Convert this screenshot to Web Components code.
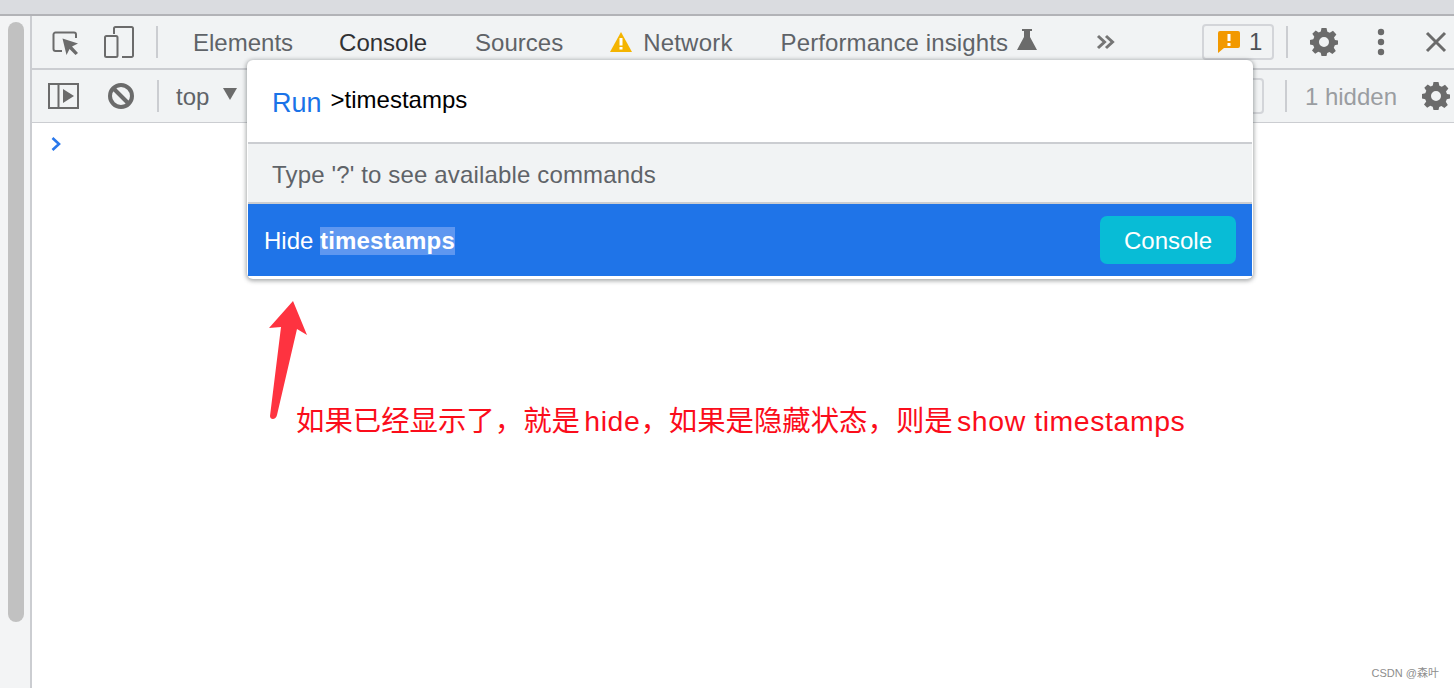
<!DOCTYPE html>
<html lang="en">
<head>
<meta charset="utf-8">
<title>DevTools command menu</title>
<style>
  html, body { margin: 0; height: 100%; overflow: hidden; background: #fff; }
  body { font-family: "Liberation Sans", Arimo, Arial, sans-serif; }
</style>
</head>
<body>
<dev-tools>
  <tool-bar slot="main" class="tabs">
    <tool-icon name="inspect"></tool-icon>
    <tool-icon name="device"></tool-icon>
    <tool-sep></tool-sep>
    <tab-strip>
      <tab-item style="margin-right:-1px">Elements</tab-item>
      <tab-item active style="margin-right:1px">Console</tab-item>
      <tab-item>Sources</tab-item>
      <tab-item style="letter-spacing:.2px;margin-right:1px"><tool-icon slot="before" name="warning"></tool-icon>Network</tab-item>
      <tab-item style="letter-spacing:.1px"><span>Performance insights</span><tool-icon slot="after" name="flask"></tool-icon></tab-item>
    </tab-strip>
  </tool-bar>
  <command-menu slot="over"></command-menu>
  <note-arrow slot="over"></note-arrow>
</dev-tools>

<script>
const ICONS = {
  inspect: [28, 28, '<path d="M11 23H4.500A2 2 0 0 1 2.500 21V6.500A2 2 0 0 1 4.500 4.500H23A2 2 0 0 1 25 6.500V10" fill="none" stroke="#6b6b6b" stroke-width="2"/><path d="M11.500 10.500 27 15.500 21 18.500 27 25 24.500 27 18.500 21 15.500 27Z" fill="#6b6b6b"/>'],
  device: [30, 32, '<path d="M10 8V2.500A1.500 1.500 0 0 1 11.500 1H27.500A1.500 1.500 0 0 1 29 2.500V29.500A1.500 1.500 0 0 1 27.500 31H18" fill="none" stroke="#6b6b6b" stroke-width="2"/><rect x="1" y="10" width="12.500" height="21" rx="1.500" fill="none" stroke="#6b6b6b" stroke-width="2"/>'],
  warning: [22, 20, '<path d="M11 0 22 20H0Z" fill="#f4b400"/><rect x="9.500" y="6" width="3" height="7.500" fill="#fff"/><rect x="9.500" y="15" width="3" height="2.500" fill="#fff"/>'],
  flask: [20, 21, '<path d="M5 0H15V2H13V8L20 21H0L7 8V2H5Z" fill="#6b6b6b"/>'],
  more: [19, 16, '<path d="M2 2 8.500 8 2 14M10 2 16.500 8 10 14" fill="none" stroke="#757575" stroke-width="3"/>'],
  issue: [22, 22, '<path d="M2 0H20A2 2 0 0 1 22 2V15A2 2 0 0 1 20 17H6L0 22V2A2 2 0 0 1 2 0Z" fill="#f29900"/><rect x="9.500" y="3" width="3" height="7" fill="#fff"/><rect x="9.500" y="12" width="3" height="3" fill="#fff"/>'],
  gear: [28, 28, '<path fill-rule="evenodd" d="M11.500 0H16.500L17.400 3.700 19.800 4.700 23 2.700 26.400 6.500 24 9.400 25 12 28 12.500V16.500L24.800 17.300 23.800 19.700 25.800 23 22.400 26 19.400 24 17.200 25 16.500 28H11.500L10.700 24.800 8.300 23.800 5.200 25.800 2 22.500 4.200 19.500 3.200 17.200 0 16.500V12L3.300 11.200 4.300 8.800 2.300 5.700 5.700 2.500 8.700 4.500 10.800 3.500ZM14 9A5 5 0 1 0 14 19 5 5 0 0 0 14 9Z" fill="#6b6b6b"/>'],
  dots: [8, 28, '<circle cx="4" cy="4" r="3.200" fill="#6b6b6b"/><circle cx="4" cy="14" r="3.200" fill="#6b6b6b"/><circle cx="4" cy="24" r="3.200" fill="#6b6b6b"/>'],
  close: [22, 22, '<path d="M2 2 20 20M20 2 2 20" stroke="#6b6b6b" stroke-width="3"/>'],
  sidebar: [31, 26, '<rect x="1" y="1" width="29" height="24" fill="none" stroke="#6b6b6b" stroke-width="2"/><path d="M10.500 1V25" stroke="#6b6b6b" stroke-width="2"/><path d="M15 6 26 13 15 20Z" fill="#6b6b6b"/>'],
  block: [28, 28, '<circle cx="14" cy="14" r="11" fill="none" stroke="#6b6b6b" stroke-width="4"/><path d="M6.500 6.500 21.500 21.500" stroke="#6b6b6b" stroke-width="4"/>'],
  caret: [16, 12, '<path d="M1 0H15L8 12Z" fill="#6b6b6b"/>'],
  prompt: [12, 16, '<path d="M2.500 2 9 8 2.500 14" fill="none" stroke="#2a78eb" stroke-width="2.600"/>']
};

class ToolIcon extends HTMLElement {
  constructor() {
    super();
    const [w, h, body] = ICONS[this.getAttribute('name')];
    this.attachShadow({ mode: 'open' });
    this.shadowRoot.innerHTML = `
      <style>
        :host { display: inline-flex; flex: none; }
        svg { display: block; }
      </style>
      <svg width="${w}" height="${h}" viewBox="0 0 ${w} ${h}">${body}</svg>
    `;
  }
}

class ToolSep extends HTMLElement {
  constructor() {
    super();
    this.attachShadow({ mode: 'open' });
    this.shadowRoot.innerHTML = `
      <style>
        :host { display: block; flex: none; width: 2px; height: 32px; background: #cbcdd1; }
      </style>
    `;
  }
}

class TabItem extends HTMLElement {
  constructor() {
    super();
    this.attachShadow({ mode: 'open' });
    this.shadowRoot.innerHTML = `
      <style>
        :host {
          display: flex; align-items: center; flex: none; padding-top: 2px;
          font-size: 24px; color: #5f6368; white-space: nowrap;
        }
        :host([active]) { color: #303134; }
        ::slotted([slot=before]) { margin-right: 11px; margin-top: -2px; }
        ::slotted([slot=after]) { margin-left: 9px; margin-top: -7px; }
      </style>
      <slot name="before"></slot><slot></slot><slot name="after"></slot>
    `;
  }
}

class TabStrip extends HTMLElement {
  constructor() {
    super();
    this.attachShadow({ mode: 'open' });
    this.shadowRoot.innerHTML = `
      <style>
        :host { display: flex; align-items: center; flex: none; gap: 47px; margin-left: 35px; height: 100%; }
      </style>
      <slot></slot>
    `;
  }
}

class ToolBar extends HTMLElement {
  constructor() {
    super();
    this.attachShadow({ mode: 'open' });
    this.shadowRoot.innerHTML = `
      <style>
        :host {
          display: flex; align-items: center; box-sizing: border-box;
          height: 54px; background: #f1f3f4; border-bottom: 2px solid #cbcdd1;
        }
        .tail { display: flex; align-items: center; height: 100%; margin-left: auto; }
        .gap-a { margin-left: 59px; }
        .issues {
          display: flex; align-items: center; gap: 9px; box-sizing: border-box;
          width: 72px; height: 36px; padding-left: 14px; margin-right: 12px;
          border: 2px solid #d3d5d9; border-radius: 4px;
          font-size: 24px; color: #4d5156;
        }
        .first { display: flex; align-items: center; height: 100%; }
      </style>
      <div class="first">
        <slot></slot>
        <tool-icon class="gap-a" name="more"></tool-icon>
      </div>
      <div class="tail">
        <div class="issues"><tool-icon name="issue"></tool-icon>1</div>
        <tool-sep></tool-sep>
        <tool-icon name="gear" style="margin-left:22px"></tool-icon>
        <tool-icon name="dots" style="margin-left:39px"></tool-icon>
        <tool-icon name="close" style="margin:0 7px 0 40px"></tool-icon>
      </div>
    `;
  }
  connectedCallback() {
    const kids = this.children;
    kids[0].style.marginLeft = '19px';
    kids[1].style.marginLeft = '25px';
    kids[2].style.marginLeft = '22px';
  }
}

class FilterBar extends HTMLElement {
  constructor() {
    super();
    this.attachShadow({ mode: 'open' });
    this.shadowRoot.innerHTML = `
      <style>
        :host {
          display: flex; align-items: center; box-sizing: border-box;
          height: 53px; padding-bottom: 1px; background: #f1f3f4; border-bottom: 1px solid #cbcdd1;
        }
        .ctx { font-size: 24px; color: #5f6368; margin-left: 17px; padding-top: 2px; }
        .stale {
          box-sizing: border-box; width: 13px; height: 36px; margin-left: auto;
          border: 2px solid #d3d5d9; border-left: 0; border-radius: 0 4px 4px 0;
        }
        .hidden { font-size: 24px; color: #9a9da1; margin-left: 18px; padding-top: 2px; }
        tool-sep { flex: none; }
      </style>
      <tool-icon name="sidebar" style="margin-left:16px"></tool-icon>
      <tool-icon name="block" style="margin-left:28px"></tool-icon>
      <tool-sep style="margin-left:22px"></tool-sep>
      <span class="ctx">top</span>
      <tool-icon name="caret" style="margin-left:13px;margin-top:-3px"></tool-icon>
      <div class="stale"></div>
      <tool-sep style="margin-left:21px"></tool-sep>
      <span class="hidden">1 hidden</span>
      <tool-icon name="gear" style="margin:0 4px 0 25px"></tool-icon>
    `;
  }
}

class CommandMenu extends HTMLElement {
  constructor() {
    super();
    this.attachShadow({ mode: 'open' });
    this.shadowRoot.innerHTML = `
      <style>
        :host {
          position: absolute; left: 247px; top: 60px; width: 1006px;
          display: flex; flex-direction: column; box-sizing: border-box;
          background: #fff; border-radius: 6px; padding: 0 1px 3px;
          box-shadow: 0 1px 4px 1px rgba(60,64,67,.45);
        }
        .prompt { display: flex; height: 82px; box-sizing: border-box; padding-left: 24px; }
        .run { font-size: 27px; color: #1a73e8; margin-top: 27px; line-height: 32px; }
        .query { font-size: 24px; color: #000; margin: 26px 0 0 9px; line-height: 28px; }
        .hint {
          height: 60px; box-sizing: border-box; padding: 3px 0 0 24px;
          display: flex; align-items: center; letter-spacing: .15px;
          background: #f1f3f4; font-size: 24px; color: #5f6368;
          border-top: 2px solid #cbcdd1;
        }
        .row {
          height: 74px; box-sizing: border-box; padding: 0 16px;
          display: flex; align-items: center; justify-content: space-between;
          background: #1f74e8; color: #fff; font-size: 24px;
          border-top: 2px solid #cbcdd1;
        }
        .what { padding-top: 1px; }
        mark {
          display: inline-block; background: #5e97f0; color: #fff; letter-spacing: .15px;
          font-weight: 700; line-height: 28px;
        }
        .tag {
          width: 136px; height: 48px; border-radius: 7px; background: #08bcd6;
          display: flex; align-items: center; justify-content: center;
          font-size: 24px; padding-top: 2px; box-sizing: border-box;
        }
      </style>
      <div class="prompt"><span class="run">Run</span><span class="query">&gt;timestamps</span></div>
      <div class="hint">Type '?' to see available commands</div>
      <div class="row"><span class="what">Hide <mark>timestamps</mark></span><span class="tag">Console</span></div>
    `;
  }
}

class NoteArrow extends HTMLElement {
  constructor() {
    super();
    this.attachShadow({ mode: 'open' });
    this.shadowRoot.innerHTML = `
      <style>
        :host { display: contents; }
        svg { position: absolute; left: 265px; top: 298px; }
        .note {
          position: absolute; left: 296px; top: 404px; white-space: nowrap; word-spacing: -3.5px;
          font: 28.4px/34px "Liberation Sans", "Noto Sans CJK SC", sans-serif; color: #fb0d1b;
        }
        .en { letter-spacing: .6px; word-spacing: 0; }
      </style>
      <svg width="46" height="126" viewBox="0 0 46 126">
        <path d="M28 3 42 37 32 31 12 117C11 122 5 122 5 118L16 29 4 30Z" fill="#fe3340"/>
      </svg>
      <div class="note">如果已经显示了，就是 <span class="en">hide</span>，如果是隐藏状态，则是 <span class="en">show timestamps</span></div>
    `;
  }
}

class DevTools extends HTMLElement {
  constructor() {
    super();
    this.attachShadow({ mode: 'open' });
    this.shadowRoot.innerHTML = `
      <style>
        :host {
          display: grid; grid-template-columns: 32px 1fr; grid-template-rows: 16px 1fr;
          position: relative; width: 1454px; height: 688px; background: #fff; overflow: hidden;
        }
        .top { grid-column: 1 / 3; background: #dadce0; border-bottom: 2px solid #b2b3b7; box-sizing: border-box; }
        .rail { background: #f3f4f5; border-right: 2px solid #cbcdd1; box-sizing: border-box; padding: 6px 6px 0 8px; }
        .thumb { height: 600px; background: #c1c1c1; border-radius: 8px; }
        .panel { display: flex; flex-direction: column; min-width: 0; }
        .console { padding: 13px 0 0 18px; }
        .mark {
          position: absolute; right: 15px; bottom: 8px;
          font: 11px/14px "Liberation Sans", "Noto Sans CJK SC", sans-serif; color: #8d8d8d;
        }
      </style>
      <div class="top"></div>
      <div class="rail"><div class="thumb"></div></div>
      <div class="panel">
        <slot name="main"></slot>
        <filter-bar></filter-bar>
        <div class="console"><tool-icon name="prompt"></tool-icon></div>
      </div>
      <slot name="over"></slot>
      <div class="mark">CSDN @森叶</div>
    `;
  }
}

customElements.define('tool-icon', ToolIcon);
customElements.define('tool-sep', ToolSep);
customElements.define('tab-item', TabItem);
customElements.define('tab-strip', TabStrip);
customElements.define('tool-bar', ToolBar);
customElements.define('filter-bar', FilterBar);
customElements.define('command-menu', CommandMenu);
customElements.define('note-arrow', NoteArrow);
customElements.define('dev-tools', DevTools);
</script>
</body>
</html>
